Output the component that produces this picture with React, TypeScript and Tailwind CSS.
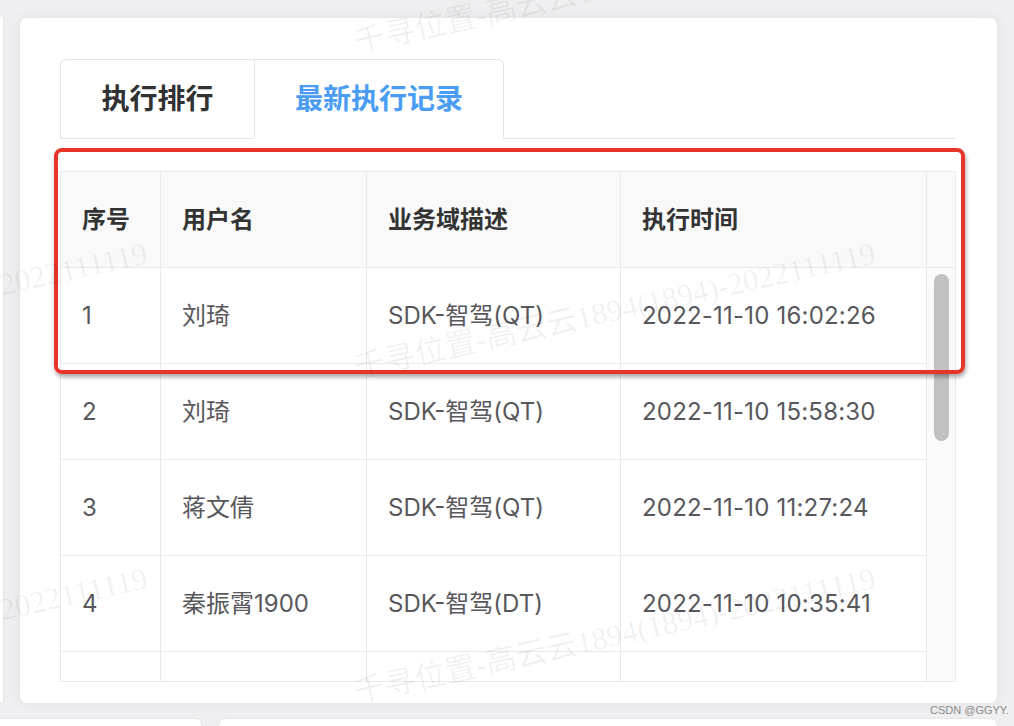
import React from "react";

const rows = [
    { id: 1, name: "刘琦", domain: "SDK-智驾(QT)", time: "2022-11-10 16:02:26" },
    { id: 2, name: "刘琦", domain: "SDK-智驾(QT)", time: "2022-11-10 15:58:30" },
    { id: 3, name: "蒋文倩", domain: "SDK-智驾(QT)", time: "2022-11-10 11:27:24" },
    { id: 4, name: "秦振霄1900", domain: "SDK-智驾(DT)", time: "2022-11-10 10:35:41" },
    { id: 5, name: "", domain: "", time: "" },
];

const WM = "千寻位置-高云云1894(1894)-2022111119";

export default function App() {
    return (
        <div className="relative w-[1014px] h-[726px] overflow-hidden bg-[#efeff1] font-['Inter','Noto_Sans_CJK_SC',sans-serif]">
            {/* top row: edge of the neighbour card + main card */}
            <div className="flex gap-[15px] pt-[17px]">
                <div className="w-[4px] h-[687px] bg-white border-r border-b border-[#e6e6ea] rounded-br-[6px]" />

                <div className="relative w-[979px] h-[687px] bg-white border border-[#e8e8ec] rounded-[8px] shadow-[0_0_14px_rgba(0,0,0,0.05)] pt-[41px] pl-[40px]">
                    {/* tabs header */}
                    <div className="flex w-[896px] border-b border-[#e4e4ec]">
                        <div className="flex -mb-px border-l border-t border-r border-[#e4e4ec] rounded-t-[6px]">
                            <div className="w-[193px] h-[79px] border-b border-[#e4e4ec] flex items-center justify-center text-[28px] font-semibold text-[#303133]">
                                执行排行
                            </div>
                            <div className="w-[249px] h-[79px] border-l border-b border-l-[#e4e4ec] border-b-white flex items-center justify-center text-[28px] font-semibold text-[#4a9df3]">
                                最新执行记录
                            </div>
                        </div>
                    </div>

                    {/* table */}
                    <div className="mt-[32px] w-[896px] h-[511px] border border-[#e8e8ef] flex flex-col">
                        <div className="flex h-[96px] bg-[#f9f9fa] border-b border-[#e8e8ef] text-[24px] font-semibold text-[#333]">
                            <div className="w-[100px] border-r border-[#e8e8ef] px-[21px] flex items-center">序号</div>
                            <div className="w-[206px] border-r border-[#e8e8ef] px-[21px] flex items-center">用户名</div>
                            <div className="w-[254px] border-r border-[#e8e8ef] px-[21px] flex items-center">业务域描述</div>
                            <div className="w-[306px] border-r border-[#e8e8ef] px-[21px] flex items-center">执行时间</div>
                            <div className="flex-1" />
                        </div>
                        <div className="flex flex-1 min-h-0">
                            <div className="w-[866px] overflow-hidden text-[24px] text-[#58585c]">
                                {rows.map((r) => (
                                    <div key={r.id} className="flex h-[96px] border-b border-[#e8e8ef]">
                                        <div className="w-[100px] border-r border-[#e8e8ef] px-[21px] flex items-center">{r.time ? r.id : ""}</div>
                                        <div className="w-[206px] border-r border-[#e8e8ef] px-[21px] flex items-center">{r.name}</div>
                                        <div className="w-[254px] border-r border-[#e8e8ef] px-[21px] flex items-center">{r.domain}</div>
                                        <div className="w-[306px] border-r border-[#e8e8ef] px-[21px] flex items-center tracking-[0.2px]">{r.time}</div>
                                    </div>
                                ))}
                            </div>
                            {/* scrollbar gutter */}
                            <div className="flex-1 bg-[#fafafa] pt-[6px] flex justify-center">
                                <div className="w-[15px] h-[167px] rounded-full bg-[#c1c1c1]" />
                            </div>
                        </div>
                    </div>

                    {/* red highlight annotation */}
                    <div className="absolute left-[34px] top-[130px] w-[911px] h-[226px] border-[4px] border-[#e8352a] rounded-[8px] shadow-[1px_3px_4px_rgba(0,0,0,0.35)] pointer-events-none" />
                </div>
            </div>

            {/* bottom row: tops of the next cards */}
            <div className="flex gap-[16px] mt-[14px]">
                <div className="w-[202px] h-[40px] bg-white border-t border-r border-[#e6e6ea] rounded-tr-[6px]" />
                <div className="w-[780px] h-[40px] bg-white border border-[#e6e6ea] rounded-t-[8px]" />
            </div>

            {/* watermark */}
            <div className="absolute inset-0 pointer-events-none font-['Liberation_Serif','Noto_Sans_CJK_SC',serif] text-[31px] leading-none text-black/[0.06] whitespace-nowrap">
                <span className="absolute left-[358px] top-[27px] origin-bottom-left -rotate-[12.5deg]">{WM}</span>
                <span className="absolute left-[358px] top-[352px] origin-bottom-left -rotate-[12.5deg]">{WM}</span>
                <span className="absolute left-[358px] top-[677px] origin-bottom-left -rotate-[12.5deg]">{WM}</span>
                <span className="absolute left-[-370px] top-[27px] origin-bottom-left -rotate-[12.5deg]">{WM}</span>
                <span className="absolute left-[-370px] top-[352px] origin-bottom-left -rotate-[12.5deg]">{WM}</span>
                <span className="absolute left-[-370px] top-[677px] origin-bottom-left -rotate-[12.5deg]">{WM}</span>
            </div>
            <div className="absolute inset-0 pointer-events-none font-['Liberation_Serif','Noto_Sans_CJK_SC',serif] text-[28px] leading-none text-black/[0.025] whitespace-nowrap">
                <span className="absolute left-[356px] top-[102px] origin-bottom-left -rotate-[1deg]">{WM}</span>
                <span className="absolute left-[356px] top-[427px] origin-bottom-left -rotate-[1deg]">{WM}</span>
                <span className="absolute left-[-364px] top-[102px] origin-bottom-left -rotate-[1deg]">{WM}</span>
                <span className="absolute left-[-364px] top-[427px] origin-bottom-left -rotate-[1deg]">{WM}</span>
            </div>

            <div className="absolute left-[930px] top-[705px] text-[11px] leading-none text-[#8a8a8a] font-['Liberation_Sans',sans-serif]">
                CSDN @GGYY.
            </div>
        </div>
    );
}
